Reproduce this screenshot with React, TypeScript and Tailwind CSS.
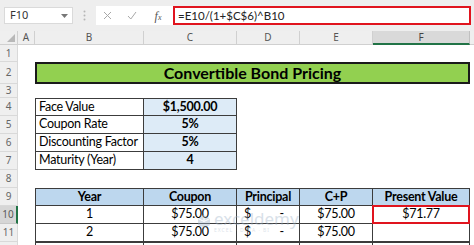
import React from "react";

const hdrCell = "bg-[#efefef] border-r border-b border-[#d0d0d0] text-[10px] text-[#555] flex items-center justify-center font-['Noto_Sans',sans-serif]";
const rowHdr = "bg-[#efefef] border-r border-b border-[#d9d9d9] text-[10px] text-[#666] flex items-center justify-center font-['Noto_Sans',sans-serif]";
const B = "border-[#3c3c3c]";
const txt = "text-[12.5px] tracking-[-0.25px] whitespace-nowrap";

function RowHdr({ n, sel }: { n?: number; sel?: boolean }) {
  return sel ? (
    <div className="bg-[#d6d6d6] border-r-2 border-r-[#217346] border-b border-b-[#c8c8c8] text-[10px] text-[#5a5a5a] flex items-center justify-center font-['Noto_Sans',sans-serif]">
      {n}
    </div>
  ) : (
    <div className={rowHdr}>{n}</div>
  );
}

function Empty() {
  return <div />;
}

export default function App() {
  const t1 = [
    ["Face Value", "$1,500.00"],
    ["Coupon Rate", "5%"],
    ["Discounting Factor", "5%"],
    ["Maturity (Year)", "4"],
  ];
  return (
    <div className="w-[474px] h-[245px] overflow-hidden bg-white relative font-['Lato',sans-serif] text-black">
      {/* toolbar */}
      <div className="h-[31px] bg-[#eeeeee] flex items-center">
        <div className="ml-[4px] w-[69px] h-[17px] bg-white border border-[#dadada] flex items-center justify-between pl-[5px] pr-[4px]">
          <span className="text-[11px] text-[#333] font-['Noto_Sans',sans-serif]">F10</span>
          <svg width="7" height="4" viewBox="0 0 7 4">
            <path d="M0 0 L7 0 L3.5 4 Z" fill="#777" />
          </svg>
        </div>
        <div className="w-[23px] flex justify-center">
          <svg width="3" height="11" viewBox="0 0 3 11">
            <circle cx="1.5" cy="1.5" r="1" fill="#b5b5b5" />
            <circle cx="1.5" cy="5.5" r="1" fill="#b5b5b5" />
            <circle cx="1.5" cy="9.5" r="1" fill="#b5b5b5" />
          </svg>
        </div>
        <div className="w-[77px] h-[19px] bg-white flex items-center">
          <div className="w-[24px] flex justify-center ml-[-1px]">
            <svg width="9" height="9" viewBox="0 0 9 9">
              <path d="M1 1 L8 8 M8 1 L1 8" stroke="#a8a8a8" strokeWidth="1" fill="none" />
            </svg>
          </div>
          <div className="w-[26px] flex justify-center">
            <svg width="10" height="9" viewBox="0 0 10 9">
              <path d="M1 5 L3.8 8 L9 1" stroke="#a8a8a8" strokeWidth="1" fill="none" />
            </svg>
          </div>
          <div className="w-[26px] flex justify-center">
            <span className="italic text-[12px] text-[#555] font-['Liberation_Serif',serif] leading-none">
              f<span className="text-[8px]">x</span>
            </span>
          </div>
        </div>
        <div className="w-[298px] h-[19px] bg-white border-2 border-[#e0141e] flex items-center pl-[3px]">
          <span className="text-[11.5px] text-[#222] leading-none">=E10/(1+$C$6)^B10</span>
        </div>
      </div>

      {/* sheet grid */}
      <div className="grid grid-cols-[18px_17px_109px_93px_63px_73px_97px_1fr] grid-rows-[14px_17px_22px_14px_18px_18px_18px_18px_18px_18px_18px_18px_18px]">
        {/* column headers */}
        <div className="bg-[#efefef] border-r border-b border-[#d0d0d0] flex items-end justify-end pr-[2px] pb-[2px]">
          <svg width="8" height="8" viewBox="0 0 8 8">
            <path d="M8 0 L8 8 L0 8 Z" fill="#b8b8b8" />
          </svg>
        </div>
        <div className={hdrCell}>A</div>
        <div className={hdrCell}>B</div>
        <div className={hdrCell}>C</div>
        <div className={hdrCell}>D</div>
        <div className={hdrCell}>E</div>
        <div className="bg-[#d9d9d9] border-r border-[#c0c0c0] border-b-2 border-b-[#217346] text-[10px] text-[#444] flex items-center justify-center font-['Noto_Sans',sans-serif]">
          F
        </div>
        <div className="bg-[#efefef] border-b border-[#d0d0d0]" />

        {/* row 1 */}
        <RowHdr n={1} />
        <Empty /><Empty /><Empty /><Empty /><Empty /><Empty /><Empty />

        {/* row 2 */}
        <RowHdr n={2} />
        <Empty />
        <div className="col-span-5 bg-[#92d050] border-2 border-[#1a1a1a] flex items-center justify-center">
          <span className="font-bold text-[16px] leading-none whitespace-nowrap">Convertible Bond Pricing</span>
        </div>
        <Empty />

        {/* row 3 */}
        <RowHdr n={3} />
        <Empty /><Empty /><Empty /><Empty /><Empty /><Empty /><Empty />

        {/* rows 4-7 */}
        {t1.map(([k, v], i) => (
          <React.Fragment key={k}>
            <RowHdr n={4 + i} />
            <Empty />
            <div className={`border-l border-r border-b ${i === 0 ? "border-t" : ""} ${B} flex items-center pl-[3px] ${txt}`}>
              {k}
            </div>
            <div className={`border-r border-b ${i === 0 ? "border-t" : ""} ${B} bg-[#ddebf7] flex items-center justify-center font-bold ${txt}`}>
              {v}
            </div>
            <Empty /><Empty /><Empty /><Empty />
          </React.Fragment>
        ))}

        {/* row 8 */}
        <RowHdr n={8} />
        <Empty /><Empty /><Empty /><Empty /><Empty /><Empty /><Empty />

        {/* row 9 header */}
        <RowHdr n={9} />
        <Empty />
        {["Year", "Coupon", "Principal", "C+P", "Present Value"].map((h, i) => (
          <div
            key={h}
            className={`${i === 0 ? "border-l" : ""} border-t border-r border-b ${B} bg-[#bdd7ee] flex items-center justify-center font-bold ${txt}`}
          >
            {h}
          </div>
        ))}
        <Empty />

        {/* rows 10-11 */}
        {[1, 2].map((y) => (
          <React.Fragment key={y}>
            <RowHdr n={9 + y} sel={y === 1} />
            <Empty />
            <div className={`border-l border-r border-b ${B} flex items-center justify-center ${txt}`}>{y}</div>
            <div className={`border-r border-b ${B} flex items-center justify-center ${txt}`}>$75.00</div>
            <div className={`border-r border-b ${B} flex items-center justify-between pl-[7px] pr-[15px] ${txt}`}>
              <span>$</span>
              <span>-</span>
            </div>
            <div className={`border-r border-b ${B} flex items-center justify-center ${txt}`}>$75.00</div>
            <div className={`border-r border-b ${B} flex items-center justify-center ${txt} relative`}>
              {y === 1 ? "$71.77" : ""}
              {y === 1 && <div className="absolute left-[-1px] top-[-1px] right-[-1px] bottom-[-1px] border-2 border-[#e0141e]" />}
            </div>
            <Empty />
          </React.Fragment>
        ))}

        {/* row 12 (mostly below the fold) */}
        <RowHdr />
        <Empty />
        <div className={`border-l border-r border-t ${B}`} />
        <div className={`border-r border-t ${B}`} />
        <div className={`border-r border-t ${B}`} />
        <div className={`border-r border-t ${B}`} />
        <div className={`border-r border-t ${B}`} />
        <Empty />
      </div>

      {/* watermark */}
      <div className="absolute left-[197px] top-[210px] flex items-center gap-[3px] opacity-40 pointer-events-none">
        <svg width="14" height="15" viewBox="0 0 14 15">
          <path d="M7 1 L13 4.5 L13 11 L7 14 L1 11 L1 4.5 Z" fill="#9fb3c8" />
          <path d="M7 1 L7 7.5 M1 4.5 L7 7.5 L13 4.5" stroke="#ffffff" strokeWidth="1" fill="none" />
        </svg>
        <div className="flex flex-col leading-none">
          <span className="text-[17px] text-[#9fb3c8] font-['Noto_Sans',sans-serif] leading-none">exceldemy</span>
          <span className="text-[5px] text-[#a9b9ca] tracking-[1px] font-['Noto_Sans',sans-serif] mt-[1px]">EXCEL · DATA · BI</span>
        </div>
      </div>
    </div>
  );
}
